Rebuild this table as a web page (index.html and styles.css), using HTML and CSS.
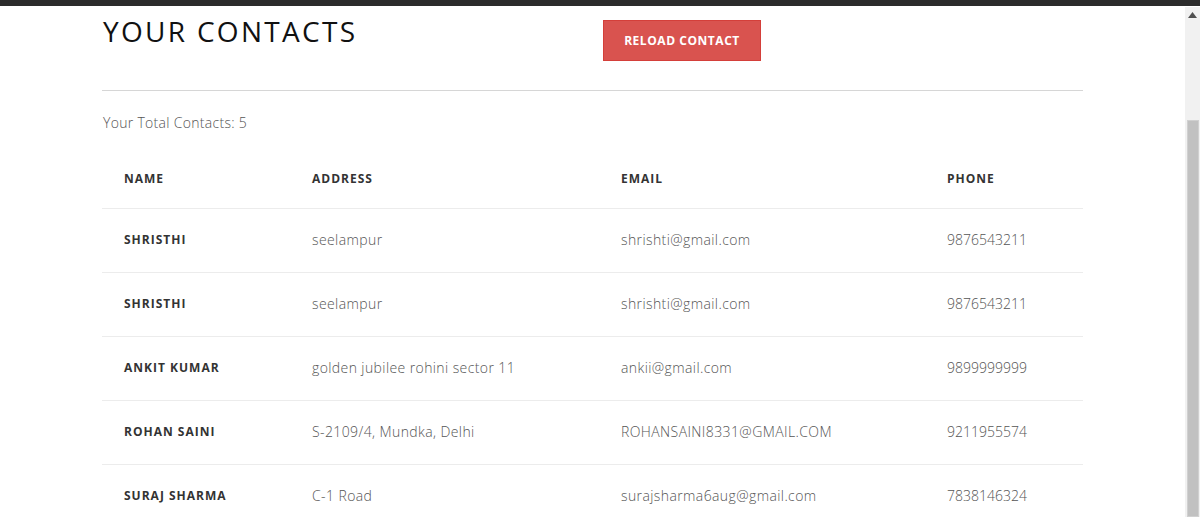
FILE: index.html
```html
<!DOCTYPE html>
<html lang="en">
<head>
<meta charset="utf-8">
<title>Your Contacts</title>
<link rel="stylesheet" href="styles.css">
</head>
<body>
<div class="topbar"></div>
<div class="viewport">
  <main class="page">
    <div class="container">
      <div class="header">
        <h1 class="title">YOUR CONTACTS</h1>
        <div class="actions">
          <button class="btn-reload" type="button">RELOAD CONTACT</button>
        </div>
      </div>
      <hr class="divider">
      <p class="total">Your Total Contacts: 5</p>
      <table class="contacts">
        <colgroup>
          <col class="c-name">
          <col class="c-address">
          <col class="c-email">
          <col class="c-phone">
        </colgroup>
        <thead>
          <tr><th>NAME</th><th>ADDRESS</th><th>EMAIL</th><th>PHONE</th></tr>
        </thead>
        <tbody>
          <tr><td class="name">SHRISTHI</td><td>seelampur</td><td>shrishti@gmail.com</td><td class="phone">9876543211</td></tr>
          <tr><td class="name">SHRISTHI</td><td>seelampur</td><td>shrishti@gmail.com</td><td class="phone">9876543211</td></tr>
          <tr><td class="name">ANKIT KUMAR</td><td>golden jubilee rohini sector 11</td><td>ankii@gmail.com</td><td class="phone">9899999999</td></tr>
          <tr><td class="name">ROHAN SAINI</td><td>S-2109/4, Mundka, Delhi</td><td>ROHANSAINI8331@GMAIL.COM</td><td class="phone">9211955574</td></tr>
          <tr><td class="name">SURAJ SHARMA</td><td>C-1 Road</td><td>surajsharma6aug@gmail.com</td><td class="phone">7838146324</td></tr>
        </tbody>
      </table>
    </div>
  </main>
  <div class="scrollbar" aria-hidden="true">
    <div class="sb-arrow"><svg width="9" height="6" viewBox="0 0 9 6"><path d="M4.5 0 L9 6 L0 6 Z" fill="#505050"/></svg></div>
    <div class="sb-gap"></div>
    <div class="sb-thumb"></div>
  </div>
</div>
</body>
</html>
```
FILE: styles.css
```css
html, body {
  margin: 0;
  padding: 0;
  height: 517px;
  overflow: hidden;
  background: #fff;
  font-family: "Open Sans", "Liberation Sans", sans-serif;
}

.topbar {
  height: 6px;
  background: #2b2b2b;
}

.viewport {
  display: flex;
  height: 511px;
}

.page {
  flex: 1;
  min-width: 0;
}

.container {
  margin-left: 102px;
  width: 981px;
}

.header {
  display: grid;
  grid-template-columns: 501px 1fr;
  align-items: start;
  padding-top: 8px;
}

.title {
  margin: 0;
  font-size: 28px;
  line-height: 34px;
  font-weight: 400;
  letter-spacing: 2.3px;
  color: #111;
  padding-left: 1px;
}

.actions {
  padding-top: 6px;
}

.btn-reload {
  display: block;
  width: 158px;
  height: 41px;
  background: #d9534f;
  border: 1px solid #d43f3a;
  color: #fff;
  font-family: "Open Sans", "Liberation Sans", sans-serif;
  font-size: 12px;
  font-weight: 700;
  letter-spacing: 0.55px;
  padding: 0;
  text-align: center;
}

.divider {
  margin: 29px 0 0;
  border: 0;
  border-top: 1px solid #d6d6d6;
  height: 0;
}

.total {
  margin: 22px 0 0 1px;
  font-size: 14px;
  line-height: 20px;
  font-weight: 300;
  color: #555;
  letter-spacing: 0.3px;
}

.contacts {
  margin-top: 15px;
  width: 981px;
  border-collapse: collapse;
  table-layout: fixed;
}

.c-name { width: 188px; }
.c-address { width: 309px; }
.c-email { width: 326px; }
.c-phone { width: 158px; }

.contacts th {
  text-align: left;
  padding: 21px 0 19px 22px;
  line-height: 20px;
  font-size: 12px;
  font-weight: 700;
  letter-spacing: 1px;
  color: #333;
  border-bottom: 1px solid #ececec;
}

.contacts td {
  padding: 21px 0 22px 22px;
  line-height: 20px;
  font-size: 14px;
  font-weight: 300;
  letter-spacing: 0.4px;
  color: #555;
  border-bottom: 1px solid #ececec;
  white-space: nowrap;
}

.contacts td.name {
  font-size: 12px;
  font-weight: 700;
  letter-spacing: 1px;
  color: #333;
}

.contacts td.phone {
  letter-spacing: 0;
}

.scrollbar {
  width: 15px;
  margin-top: 1px;
  background: #f1f1f1;
  display: flex;
  flex-direction: column;
}

.sb-arrow {
  height: 15px;
  display: flex;
  align-items: center;
  justify-content: center;
}

.sb-gap {
  height: 98px;
}

.sb-thumb {
  flex: 1;
  margin: 0 1px 0 2px;
  background: #c1c1c1;
  border: 1px solid #d0d0d0;
}
```
